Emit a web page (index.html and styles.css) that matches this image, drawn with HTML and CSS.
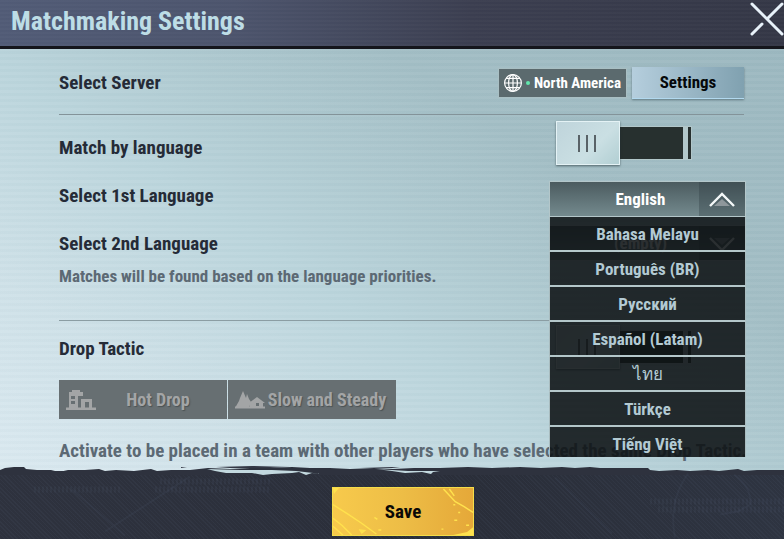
FILE: index.html
```html
<!DOCTYPE html>
<html lang="en">
<head>
  <meta charset="UTF-8" />
  <meta name="viewport" content="width=device-width, initial-scale=1.0"/>
  <title>Matchmaking Settings</title>
  <link rel="stylesheet" href="styles.css">
</head>
<body>
  <div class="screen">
    <header class="header">
      <h1>Matchmaking Settings</h1>
      <button class="close-btn" type="button" aria-label="Close">
        <svg viewBox="0 0 34 34" width="34" height="34" fill="none" stroke="#e8f2fa" stroke-width="3" stroke-linecap="round">
          <path d="M2 2 32 32M32 2 18 16M12 22 2 32"/>
        </svg>
      </button>
    </header>

    <main class="content">
      <section class="server-row">
        <h2 class="label">Select Server</h2>
        <div class="server-controls">
          <div class="server-name">
            <svg viewBox="0 0 20 20" width="20" height="20" fill="none" stroke="#fff" stroke-width="1.2">
              <circle cx="10" cy="10" r="8.4"/>
              <ellipse cx="10" cy="10" rx="4.4" ry="8.4"/>
              <path d="M10 1.6v16.8M1.6 10h16.8M3 5.4h14M3 14.6h14"/>
            </svg>
            <span class="ping"></span>
            <span>North America</span>
          </div>
          <button class="settings-btn" type="button">Settings</button>
        </div>
      </section>

      <section class="language">
        <div class="group">
          <div class="labels">
            <label class="label" for="matchLanguage">Match by language</label>
            <label class="label" for="firstLanguage">Select 1st Language</label>
            <label class="label" for="secondLanguage">Select 2nd Language</label>
            <p class="hint">Matches will be found based on the language priorities.</p>
          </div>
          <div class="controls">
            <input type="checkbox" class="toggle" id="matchLanguage">
            <div class="dropdown">
              <select id="firstLanguage">
                <option>English</option>
              </select>
              <svg class="arrow" viewBox="0 0 46 34" width="46" height="34">
                <path d="M15 24 23 17 31 24Z" fill="#8e979b"/>
                <path d="M11 24 23 12 35 24" fill="none" stroke="#f4f8f8" stroke-width="2.4"/>
              </svg>
              <ul class="menu">
                <li><button type="button">Bahasa Melayu</button></li>
                <li><button type="button">Português (BR)</button></li>
                <li><button type="button" lang="ru">Русский</button></li>
                <li><button type="button">Español (Latam)</button></li>
                <li><button type="button" class="thai" lang="th">ไทย</button></li>
                <li><button type="button">Türkçe</button></li>
                <li><button type="button" lang="vi">Tiếng Việt</button></li>
              </ul>
            </div>
            <div class="dropdown">
              <select id="secondLanguage">
                <option>(empty)</option>
              </select>
              <svg class="arrow" viewBox="0 0 46 34" width="46" height="34">
                <path d="M15 12 23 19 31 12Z" fill="#8e979b"/>
                <path d="M11 12 23 24 35 12" fill="none" stroke="#f4f8f8" stroke-width="2.4"/>
              </svg>
            </div>
          </div>
        </div>
      </section>

      <section class="drop">
        <div class="group">
          <label class="label" for="dropTactic">Drop Tactic</label>
          <div class="controls">
            <input type="checkbox" class="toggle" id="dropTactic">
          </div>
        </div>
        <div class="tactics">
          <button type="button">
            <svg viewBox="0 0 30 20" width="30" height="20" fill="#a3a5a6">
              <path fill-rule="evenodd" d="M0 17.500H3V2H6V0H14V2H17V6H12V17.500H15V9H26V17.500H30V20H0ZM5 6V9H9V6ZM5 11V14H9V11ZM19 12V17.500H23V12Z"/>
            </svg>
            <span>Hot Drop</span>
          </button>
          <button type="button">
            <svg viewBox="0 0 30 20" width="30" height="20" fill="#a3a5a6">
              <path d="M0 18 4 11 5 8 8 1 11 8 12 4 14 9 16 12 14 18Z"/>
              <path fill-rule="evenodd" d="M14 13 22 7 30 13H28V18H15V13ZM21 13V16H24V13Z"/>
              <path d="M0 16.500H30V18.500H0Z"/>
            </svg>
            <span>Slow and Steady</span>
          </button>
        </div>
        <p class="hint wide">Activate to be placed in a team with other players who have selected the same Drop Tactic.</p>
      </section>
    </main>

    <footer class="footer">
      <svg class="torn" viewBox="0 0 784 12" preserveAspectRatio="none">
        <path d="M0 7 5 5 14 4 24 4 26 6 37 7 51 7 59 9 68 7 85 7 99 6 105 8 116 7 134 8 151 6 157 8 171 7 190 7 208 5 230 6 250 5 270 5 292 4 310 5 330 5 350 6 374 5 393 6 414 5 440 5 468 4 492 5 520 4 541 5 562 4 575 5 590 4 600 5 625 5 648 5 650 7 659 8 677 7 690 8 708 7 719 8 738 6 744 8 757 7 784 7V12H0Z" fill="#2e323e"/>
        <path d="M207 6 240 7 272 7 296 8 322 11 312 10 306 12 299 9 292 10 272 11 263 12 252 10 226 10 215 8ZM376 6 408 8 440 8 433 9 431 11 422 9 405 10 392 8Z" fill="#c3d9df"/>
        <path d="M181 4 187 5 181 5ZM216 4 252 3 290 4 270 5 230 5ZM360 4 400 4 392 5Z" fill="#343845"/>
      </svg>
      <svg class="scratches" viewBox="0 0 784 71" preserveAspectRatio="xMidYMid slice" fill="none" stroke="#475064">
        <path d="M72 20 125 66M190 7 105 62M612 64 555 8M688 4Q668 32 675 68M734 5Q752 18 750 35L738 42 720 45" opacity=".2" stroke-width="2"/>
        <path d="M34 20H120M155 20H270M160 12H270M650 32H784M658 40H784" stroke-width="6" stroke-dasharray="2 2" opacity=".2"/>
      </svg>
      <button class="save-btn" type="button">
        <svg viewBox="0 0 142 48" preserveAspectRatio="none" fill="none" stroke="#ffe14d" stroke-width="1.5">
          <path d="M0 17 14 26 29 36 44 47M0 31 9 38 19 48M0 39 10 48M112 1 124 14 133 19 142 25M118 1 123 8"/>
          <path d="M0 0H6L1 6ZM122 48 136 45 142 40V48ZM26 42 34 43 29 47Z" fill="#ffe14d" stroke="none"/>
          <path d="M122 17h2M127 25h2M123 33h3M135 38h3M110 42h2M42 30l3 2M46 43h3"/>
        </svg>
        <span>Save</span>
      </button>
    </footer>
  </div>
</body>
</html>
```
FILE: styles.css
```css
*,
*::before {
  margin: 0;
  padding: 0;
  box-sizing: border-box;
}

body {
  font-family: "Roboto Condensed", "Liberation Sans Narrow", "Open Sans Condensed", "Liberation Sans", sans-serif;
  font-weight: bold;
  font-size: 17px;
  color: #252b37;
}

button,
select {
  font: inherit;
  border: none;
  cursor: pointer;
}

svg {
  flex: none;
}

.screen {
  display: flex;
  flex-direction: column;
  min-height: 100vh;
  overflow: hidden;
  background:
    repeating-linear-gradient(to bottom, rgba(255, 255, 255, 0.03) 0 3px, rgba(70, 110, 120, 0.02) 3px 6px),
    linear-gradient(to top right, #dfecf3 0%, #cfe1e8 24%, #bbd5dc 44%, #a3bec5 70%, #9bb7bf 100%);
}

.header {
  display: flex;
  justify-content: space-between;
  align-items: flex-start;
  height: 49px;
  padding-left: 11px;
  border-bottom: 3px solid #15161c;
  background:
    repeating-linear-gradient(to bottom, rgba(255, 255, 255, 0.02) 0 2px, transparent 2px 4px),
    linear-gradient(to right, #515b76 0%, #4c546c 30%, #3b3e50 60%, #343746 100%);
}

.header h1 {
  font-size: 26px;
  line-height: 42px;
  color: #bddde6;
}

.close-btn {
  height: 36px;
  padding-top: 2px;
  background: none;
}

.content {
  flex: 1;
  padding: 0 38px 0 59px;
}

.label {
  font-size: 19px;
  font-weight: bold;
  line-height: 48px;
}

.hint {
  color: #5c6974;
  line-height: 16px;
}

.server-row {
  display: flex;
  justify-content: space-between;
  align-items: center;
  height: 66px;
  margin-right: 2px;
  padding-top: 2px;
  border-bottom: 1px solid #839399;
}

.server-controls {
  display: flex;
  align-items: center;
  gap: 5px;
}

.server-name {
  display: flex;
  align-items: center;
  justify-content: space-between;
  width: 129px;
  height: 30px;
  padding: 0 5px 0 4px;
  background: #5b6a6e;
  border: 1px solid #a9bfc3;
  font-size: 15px;
  color: #fff;
  white-space: nowrap;
}

.ping {
  width: 4px;
  height: 4px;
  border-radius: 50%;
  background: #62e8ad;
}

.settings-btn {
  width: 112px;
  height: 32px;
  background: linear-gradient(to right, #b5cedd, #80a1b0);
  border-bottom: 1px solid #b2d9ef;
  box-shadow: 0 1px 2px rgba(40, 60, 70, 0.5);
  color: #05080a;
}

.group {
  display: flex;
  justify-content: space-between;
}

.language {
  height: 206px;
  padding-top: 6px;
  border-bottom: 1px solid #8b9da3;
}

.labels {
  display: flex;
  flex-direction: column;
  padding-top: 3px;
}

.controls {
  display: flex;
  flex-direction: column;
  width: 197px;
}

.toggle {
  appearance: none;
  display: flex;
  width: 136px;
  height: 44px;
  margin: 0 0 16px 7px;
  background:
    linear-gradient(#27302f, #27302f) 64px 6px / 63px 32px no-repeat,
    linear-gradient(#27302f, #27302f) 132px 6px / 3px 32px no-repeat,
    linear-gradient(#b2c7ca, #b2c7ca) 64px 5px / 72px 34px no-repeat;
  cursor: pointer;
}

.toggle::before {
  content: "";
  width: 64px;
  height: 44px;
  border: 1px solid #e4f2f5;
  background:
    linear-gradient(#596267, #596267) 21px 13px / 2px 17px no-repeat,
    linear-gradient(#596267, #596267) 29px 13px / 2px 17px no-repeat,
    linear-gradient(#596267, #596267) 37px 13px / 2px 17px no-repeat,
    linear-gradient(135deg, #bfd4db, #cadfe3 60%, #b2cfd3);
  box-shadow: 0 1px 2px rgba(30, 45, 50, 0.6);
}

.dropdown {
  position: relative;
  height: 36px;
  margin-bottom: 8px;
}

.dropdown select {
  appearance: none;
  width: 100%;
  height: 100%;
  padding-right: 14px;
  border: 1px solid #b4c7ca;
  background: linear-gradient(to bottom, #4b5b5f, #748a8e);
  color: #fff;
  text-align: center;
  text-align-last: center;
}

.arrow {
  position: absolute;
  top: 1px;
  right: 1px;
  background: rgba(45, 60, 65, 0.35);
  pointer-events: none;
}

.menu {
  position: absolute;
  top: 100%;
  left: 0;
  right: 0;
  z-index: 1;
  max-height: 240px;
  overflow: hidden;
  list-style: none;
}

.menu li {
  height: 35px;
  border: 1px solid #a9bcbf;
  border-top: 0;
  border-bottom: 2px solid #b4c7ca;
  background: rgba(14, 18, 20, 0.88);
  background-clip: padding-box;
}

.menu button {
  width: 100%;
  height: 100%;
  background: none;
  color: #b3cad3;
}

.menu .thai {
  font-weight: normal;
}

.drop {
  padding-top: 4px;
}

.drop .group {
  height: 55px;
}

.tactics {
  display: flex;
  gap: 1px;
}

.tactics button {
  display: flex;
  align-items: center;
  width: 168px;
  height: 39px;
  padding: 0 7px;
  background: #676f72;
  color: #a3a5a6;
  font-size: 18px;
  white-space: nowrap;
  text-shadow: 1px 1px 1px #4c5355;
}

.tactics span {
  flex: 1;
}

.wide {
  padding-top: 24px;
  font-size: 19px;
  white-space: nowrap;
}

.footer {
  position: relative;
  display: flex;
  justify-content: center;
  height: 68px;
  padding: 16px 0 3px 22px;
  background:
    repeating-linear-gradient(45deg, rgba(100, 115, 140, 0.08) 0 1px, transparent 1px 3px),
    linear-gradient(to right, #2e323e, #2a2e39 60%, #2e3441);
}

/* ragged edge sits over the bottom of the content area */
.torn {
  position: absolute;
  top: -8px;
  left: 0;
  width: 100%;
  height: 12px;
}

.scratches {
  position: absolute;
  inset: 0;
  width: 100%;
  height: 100%;
}

.save-btn {
  position: relative;
  width: 142px;
  height: 49px;
  border: 1px solid #f5dd49;
  background: linear-gradient(to right, #f7ca4c, #edbd46 50%, #e5a839);
  font-size: 19px;
  color: #0b0906;
}

.save-btn svg {
  position: absolute;
  inset: 0;
  width: 100%;
  height: 100%;
}

.save-btn span {
  position: relative;
}
```
